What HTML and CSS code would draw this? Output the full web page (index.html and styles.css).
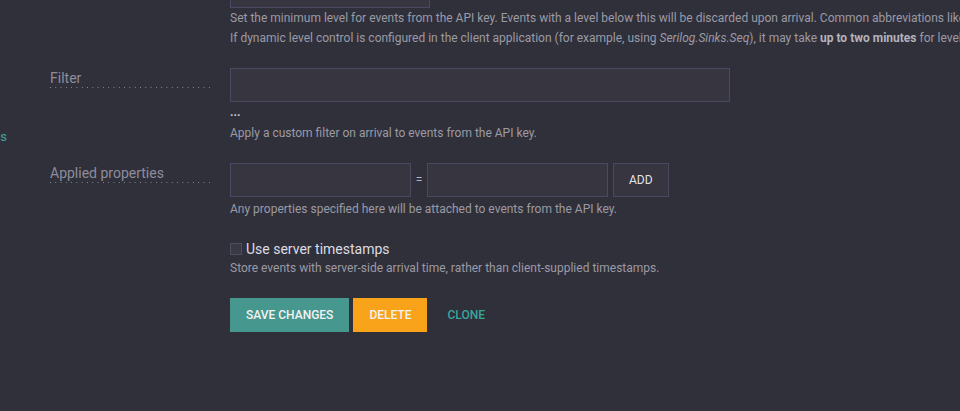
FILE: index.html
```html
<!DOCTYPE html>
<html>
<head>
<meta charset="utf-8">
<link rel="stylesheet" href="styles.css">
</head>
<body>
<div class="layout">
  <aside class="sidebar">
    <div class="nav-item">Settings</div>
  </aside>
  <main class="main">
    <form class="form">
      <div class="row">
        <div class="label-cell"></div>
        <div class="field">
          <div class="input input-level"></div>
          <p class="help">Set the minimum level for events from the API key. Events with a level below this will be discarded upon arrival. Common abbreviations like <br>If dynamic level control is configured in the client application (for example, using <em>Serilog.Sinks.Seq</em>), it may take <strong>up to two minutes</strong> for level changes to take effect.</p>
        </div>
      </div>

      <div class="row">
        <div class="label-cell"><span class="label">Filter</span></div>
        <div class="field">
          <div class="input input-filter"></div>
          <div class="ellipsis">...</div>
          <p class="help">Apply a custom filter on arrival to events from the API key.</p>
        </div>
      </div>

      <div class="row">
        <div class="label-cell"><span class="label">Applied properties</span></div>
        <div class="field">
          <div class="prop-line">
            <div class="input input-prop"></div>
            <span class="eq">=</span>
            <div class="input input-prop"></div>
            <button type="button" class="btn-add">ADD</button>
          </div>
          <p class="help help-gap">Any properties specified here will be attached to events from the API key.</p>
        </div>
      </div>

      <div class="row">
        <div class="label-cell"></div>
        <div class="field">
          <label class="check-line"><span class="checkbox"></span><span class="check-text">Use server timestamps</span></label>
          <p class="help">Store events with server-side arrival time, rather than client-supplied timestamps.</p>
        </div>
      </div>

      <div class="row">
        <div class="label-cell"></div>
        <div class="field actions">
          <button type="button" class="btn btn-save">SAVE CHANGES</button>
          <button type="button" class="btn btn-delete">DELETE</button>
          <button type="button" class="btn btn-clone">CLONE</button>
        </div>
      </div>
    </form>
  </main>
</div>
</body>
</html>
```

FILE: styles.css
```css
* { box-sizing: border-box; }
html, body {
  margin: 0;
  padding: 0;
  background: #30303a;
  height: 100%;
  overflow: hidden;
}
body {
  font-family: Roboto, "Liberation Sans", sans-serif;
  color: #9e9da8;
}
.layout {
  display: flex;
  align-items: flex-start;
}
.sidebar {
  width: 7px;
  flex: none;
  overflow: hidden;
  display: flex;
  justify-content: flex-end;
}
.nav-item {
  white-space: nowrap;
  margin-top: 127px;
  font-size: 13px;
  line-height: 20px;
  color: #3aa89c;
}
.main {
  flex: 1;
  padding-left: 43px;
  min-width: 0;
}
.form {
  margin: -26px 0 0;
  display: flex;
  flex-direction: column;
  gap: 20px;
}
.row {
  display: grid;
  grid-template-columns: 160px 1fr;
  column-gap: 20px;
}
.label-cell { padding-top: 1px; }
.label {
  display: block;
  font-size: 14px;
  line-height: 18px;
  color: #8e8c9c;
  padding-bottom: 1px;
  background-image: linear-gradient(to right, #8e8c9c 1px, transparent 1px);
  background-size: 5.3px 1px;
  background-repeat: repeat-x;
  background-position: 0 100%;
}
.field { min-width: 0; }
.input {
  height: 34px;
  background: #363540;
  border: 1px solid #4a4862;
}
.input-level { width: 200px; }
.input-filter { width: 500px; }
.input-prop { width: 181px; }
.help {
  margin: 0;
  font-size: 12px;
  line-height: 20px;
  white-space: nowrap;
  color: #9b9aa5;
}
.help em { font-style: italic; }
.help strong { font-weight: 700; color: #b4b3bc; }
.help-gap { margin-top: 2px; }
.ellipsis {
  font-size: 12px;
  line-height: 21px;
  font-weight: 700;
  color: #c8c7d0;
}
.prop-line {
  display: flex;
  align-items: center;
}
.eq {
  width: 16px;
  text-align: center;
  font-size: 12px;
  color: #b9b8c2;
}
.btn-add {
  margin-left: 5px;
  height: 34px;
  padding: 0 15px;
  background: #363540;
  border: 1px solid #4a4862;
  color: #e2e2e6;
  font-family: inherit;
  font-size: 12px;
  font-weight: 400;
}
.check-line {
  display: flex;
  align-items: center;
  height: 19px;
}
.checkbox {
  width: 12px;
  height: 12px;
  border: 1px solid #4f4d62;
  background: #393845;
  margin-right: 4px;
}
.check-text {
  font-size: 14px;
  color: #dcdce2;
}
.actions {
  display: flex;
  gap: 4px;
}
.btn {
  height: 34px;
  padding: 0 16px;
  border: 0;
  font-family: inherit;
  font-size: 12px;
  font-weight: 500;
  color: #f2f2f2;
}
.btn-save { background: #46988f; }
.btn-delete { background: #f9a31b; }
.btn-clone { background: transparent; color: #3aa59a; }
```
